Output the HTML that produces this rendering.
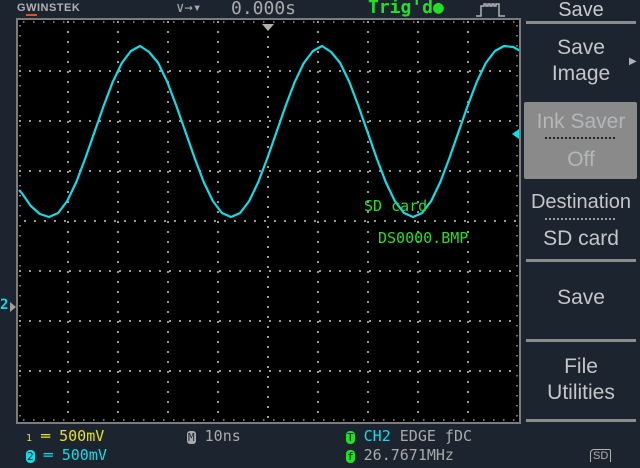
<!DOCTYPE html>
<html><head><style>
body{margin:0;width:640px;height:468px;background:#1c2430;overflow:hidden;position:relative;font-family:"Liberation Sans",sans-serif}
.t{position:absolute;white-space:nowrap}
.m{font-family:"DejaVu Sans Mono","Liberation Mono",monospace}
.lbl{position:absolute;left:522px;width:118px;text-align:center;color:#c4c6c8;font-size:21px;line-height:26px}
.sep{position:absolute;left:526px;width:110px;height:3px;background:#8a8c8e}
</style></head><body>
<div class="t" style="left:17px;top:2px;font-size:11px;color:#b0b2b4;font-weight:bold;letter-spacing:0.5px">G<span style="border-bottom:2px solid #e05020">W</span>INSTEK</div>
<div class="t m" style="left:176px;top:0px;font-size:14px;color:#a8aaac">∨→▾</div>
<div class="t m" style="left:231px;top:-2px;font-size:18px;color:#a8aaac">0.000s</div>
<div class="t m" style="left:368px;top:-3px;font-size:18px;color:#22e022;font-weight:bold">Trig'd●</div>
<svg class="t" style="left:475px;top:2px" width="36" height="16"><path d="M1 14H6V4H9V2H11V4H13V2H15V4H17V2H19V4H21V2H24V14H30" stroke="#b0b2b4" stroke-width="1.5" fill="none"/></svg>
<div class="lbl" style="top:-3px;font-size:20px;color:#c8cacc">Save</div>
<div class="sep" style="top:21px"></div>

<svg class="t" style="left:0;top:0" width="522" height="430">
<rect x="17" y="19" width="503" height="404" fill="#000" stroke="#7a7c7e" stroke-width="2"/>
<g stroke="#9a9a9a" stroke-width="2" stroke-dasharray="2 8">
<path d="M68 21V421M118 21V421M168 21V421M218 21V421M318 21V421M368 21V421M418 21V421M468 21V421"/>
<path d="M19 71H518M19 121H518M19 171H518M19 271H518M19 321H518M19 371H518"/>
</g>
<g stroke="#9a9a9a" stroke-width="2" stroke-dasharray="2 8" stroke-dashoffset="-5">
<path d="M268 21V421M19 221H518"/>
</g>
<g stroke="#9a9a9a" stroke-width="1.5" stroke-dasharray="1.5 8.5" stroke-dashoffset="-4">
<path d="M19 22H518M19 420H518M20 21V421M517 21V421"/>
</g>
<path d="M262 24H274L268 31Z" fill="#b0b0b0"/>
<clipPath id="c"><rect x="18" y="20" width="501" height="402"/></clipPath>
<polyline clip-path="url(#c)" fill="none" stroke="#10dde6" stroke-width="2.2" stroke-linejoin="round" points="19,190 21.7,193 30.8,206 39.9,214 49,217 58.1,213 67.2,201 76.3,182 85.4,158 94.5,132 103.6,106 112.7,82 121.8,63 130.9,51 140,46 149.1,52 158.2,63 167.3,82 176.4,106 185.5,132 194.6,158 203.7,182 212.8,201 221.9,213 231,217 240.1,213 249.2,201 258.3,182 267.4,158 276.5,132 285.6,106 294.7,82 303.8,63 312.9,51 322,46 331.1,52 340.2,63 349.3,82 358.4,106 367.5,132 376.6,158 385.7,182 394.8,201 403.9,213 413,217 422.1,213 431.2,201 440.3,182 449.4,158 458.5,132 467.6,106 476.7,82 485.8,63 494.9,51 504,46 513.1,47 522.2,52"/>
<path d="M10 302L16 307L10 312Z" fill="#a0a0a0"/>
</svg>
<div class="t m" style="left:0px;top:297px;font-size:14px;color:#10dde6;font-weight:bold">2</div>
<svg class="t" style="left:510px;top:128px" width="10" height="12"><path d="M9 1L2 6L9 11Z" fill="#10dde6"/></svg>

<div class="t m" style="left:364px;top:197px;font-size:15px;color:#22e022">SD card</div>
<div class="t m" style="left:378px;top:229px;font-size:15px;color:#22e022">DS0000.BMP</div>

<div class="lbl" style="top:35px">Save<br>Image</div>
<div class="t" style="left:629px;top:56px;color:#b0b2b4;font-size:10px">▶</div>
<div style="position:absolute;left:524px;top:102px;width:113px;height:77px;background:#8a8a8a;border-radius:2px"></div>
<div class="lbl" style="top:109px;color:#b4b6b8">Ink Saver</div>
<div class="t" style="left:545px;top:137px;width:70px;border-top:2px dotted #222"></div>
<div class="lbl" style="top:147px;color:#b4b6b8">Off</div>
<div class="lbl" style="top:189px;font-size:20px">Destination</div>
<div class="t" style="left:545px;top:218px;width:70px;border-top:2px dotted #9a9c9e"></div>
<div class="lbl" style="top:226px">SD card</div>
<div class="sep" style="top:259px"></div>
<div class="lbl" style="top:285px">Save</div>
<div class="sep" style="top:339px"></div>
<div class="lbl" style="top:354px">File<br>Utilities</div>
<div class="sep" style="top:419px"></div>

<div class="t m" style="left:26px;top:427px;font-size:15px;color:#e8e020"><span style="font-size:10px">1</span> ═ 500mV</div>
<div class="t m" style="left:26px;top:446px;font-size:15px;color:#10dde6"><span style="background:#10dde6;color:#1c2430;border-radius:4px;font-size:11px;padding:0 1px">2</span> ═ 500mV</div>
<div class="t m" style="left:187px;top:427px;font-size:15px;color:#a8aaac"><span style="background:#a8aaac;color:#1c2430;border-radius:3px;font-size:11px;padding:0 1px">M</span> 10ns</div>
<div class="t m" style="left:346px;top:427px;font-size:15px;color:#a8aaac"><span style="background:#22e022;color:#1c2430;border-radius:4px;font-size:11px;padding:0 1px">T</span> <span style="color:#10dde6">CH2</span>  EDGE  ƒDC</div>
<div class="t m" style="left:346px;top:446px;font-size:15px;color:#a8aaac"><span style="background:#22e022;color:#1c2430;border-radius:4px;font-size:11px;padding:0 1px">f</span> 26.7671MHz</div>
<div class="t" style="left:590px;top:449px;font-size:11px;color:#b0b2b4;border:1.5px solid #b0b2b4;border-bottom:none;padding:0 2px;border-radius:4px 2px 0 0">SD</div>
</body></html>
